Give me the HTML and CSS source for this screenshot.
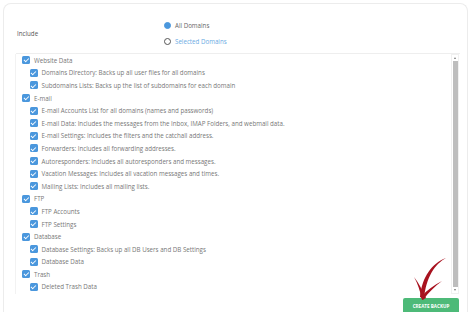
FILE: index.html
```html
<!DOCTYPE html>
<html lang="en">
<head>
    <meta charset="UTF-8">
    <title>Create Backup</title>
    <link rel="stylesheet" href="styles.css">
</head>
<body>
    <div class="card">
        <div class="include-row">
            <div class="include-label">Include</div>
            <div class="radios">
                <label class="radio"><span class="dot on"></span>All Domains</label>
                <label class="radio muted"><span class="dot"></span>Selected Domains</label>
            </div>
        </div>

        <div class="list-box">
            <ul class="items">
                <li class="lvl1"><span class="check"></span>Website Data</li>
                <li class="lvl2"><span class="check"></span>Domains Directory: Backs up all user files for all domains</li>
                <li class="lvl2"><span class="check"></span>Subdomains Lists: Backs up the list of subdomains for each domain</li>
                <li class="lvl1"><span class="check"></span>E-mail</li>
                <li class="lvl2"><span class="check"></span>E-mail Accounts List for all domains (names and passwords)</li>
                <li class="lvl2"><span class="check"></span>E-mail Data: Includes the messages from the Inbox, IMAP Folders, and webmail data.</li>
                <li class="lvl2"><span class="check"></span>E-mail Settings: Includes the filters and the catchall address.</li>
                <li class="lvl2"><span class="check"></span>Forwarders: Includes all forwarding addresses.</li>
                <li class="lvl2"><span class="check"></span>Autoresponders: Includes all autoresponders and messages.</li>
                <li class="lvl2"><span class="check"></span>Vacation Messages: Includes all vacation messages and times.</li>
                <li class="lvl2"><span class="check"></span>Mailing Lists: Includes all mailing lists.</li>
                <li class="lvl1"><span class="check"></span>FTP</li>
                <li class="lvl2"><span class="check"></span>FTP Accounts</li>
                <li class="lvl2"><span class="check"></span>FTP Settings</li>
                <li class="lvl1"><span class="check"></span>Database</li>
                <li class="lvl2"><span class="check"></span>Database Settings: Backs up all DB Users and DB Settings</li>
                <li class="lvl2"><span class="check"></span>Database Data</li>
                <li class="lvl1"><span class="check"></span>Trash</li>
                <li class="lvl2"><span class="check"></span>Deleted Trash Data</li>
            </ul>
            <div class="scrollbar">
                <span class="arrow up"></span>
                <span class="thumb"></span>
                <span class="arrow down"></span>
            </div>
        </div>

        <div class="footer">
            <button class="create-btn">CREATE BACKUP</button>
        </div>
    </div>

    <svg class="pointer" viewBox="0 0 474 312" width="474" height="312">
        <path d="M446 258 C435 264 426 277 424 299 L420 297 C422 277 432 263 446 258 Z" fill="#a8121f"/>
        <path d="M414 277 C418 284 420 291 422 300 L426 298 C422 290 419 283 414 277 Z" fill="#a8121f"/>
        <path d="M442 281 C435 286 429 292 423 300 L421 297 C427 290 434 285 442 281 Z" fill="#a8121f"/>
    </svg>
</body>
</html>
```

FILE: styles.css
```css
body {
    margin: 0;
    background-color: #fff;
    font-family: "Open Sans", Arial, sans-serif;
    color: #777;
    overflow: hidden;
    height: 312px;
}

.card {
    margin: 3px 6px 0 3px;
    height: 309px;
    border: 1px solid #ececec;
    border-bottom: none;
    border-radius: 8px 8px 0 0;
    padding: 10px 7px 0 11px;
    box-sizing: border-box;
}

.include-row {
    display: flex;
    align-items: center;
    height: 39px;
    border-bottom: 1px solid #eeeeee;
    margin-left: 1px;
}

.include-label {
    width: 147px;
    font-size: 6.2px;
    color: #555;
    padding-left: 1px;
}

.radios {
    display: flex;
    flex-direction: column;
    gap: 8px;
}

.radio {
    display: flex;
    align-items: center;
    font-size: 6.2px;
    color: #666;
    height: 8px;
}

.radio.muted {
    color: #6aaae3;
}

.dot {
    width: 5px;
    height: 5px;
    border: 1px solid #555;
    border-radius: 50%;
    margin-right: 4px;
}

.dot.on {
    border-color: #4a97dd;
    background-color: #4a97dd;
}

.list-box {
    display: flex;
    height: 240px;
    border-left: 1px solid #f2f2f2;
}

.items {
    flex: 1;
    list-style: none;
    margin: 0;
    padding: 0;
    overflow: hidden;
}

.items li {
    display: flex;
    align-items: center;
    height: 12.6px;
    font-size: 6.2px;
    white-space: nowrap;
}

.items li.lvl1 {
    padding-left: 6px;
}

.items li.lvl2 {
    padding-left: 13.5px;
}

.check {
    position: relative;
    flex: none;
    width: 8px;
    height: 8px;
    border-radius: 1.5px;
    background-color: #4a97dd;
    margin-right: 4px;
}

.check:after {
    content: "";
    position: absolute;
    left: 2.7px;
    top: 1.1px;
    width: 1.8px;
    height: 3.8px;
    border: solid #fff;
    border-width: 0 1.1px 1.1px 0;
    transform: rotate(45deg);
}

.scrollbar {
    display: flex;
    flex-direction: column;
    align-items: center;
    width: 8px;
    border: 1px solid #f0f0f0;
    box-sizing: border-box;
    margin-right: 1px;
}

.thumb {
    flex: 1;
    width: 5px;
    background-color: #bdbdbd;
}

.arrow {
    width: 0;
    height: 0;
    border-left: 1.5px solid transparent;
    border-right: 1.5px solid transparent;
    margin: 2px 0;
}

.arrow.up {
    border-bottom: 2px solid #777;
}

.arrow.down {
    border-top: 2px solid #777;
}

.footer {
    display: flex;
    justify-content: flex-end;
    padding-top: 4px;
    padding-right: 1px;
}

.create-btn {
    width: 56px;
    height: 16px;
    border: none;
    border-radius: 2px;
    background-color: #4dba78;
    color: #fff;
    font-family: "Open Sans", Arial, sans-serif;
    font-size: 4.6px;
    font-weight: bold;
    padding: 0;
}

.pointer {
    position: absolute;
    left: 0;
    top: 0;
    pointer-events: none;
}
```
